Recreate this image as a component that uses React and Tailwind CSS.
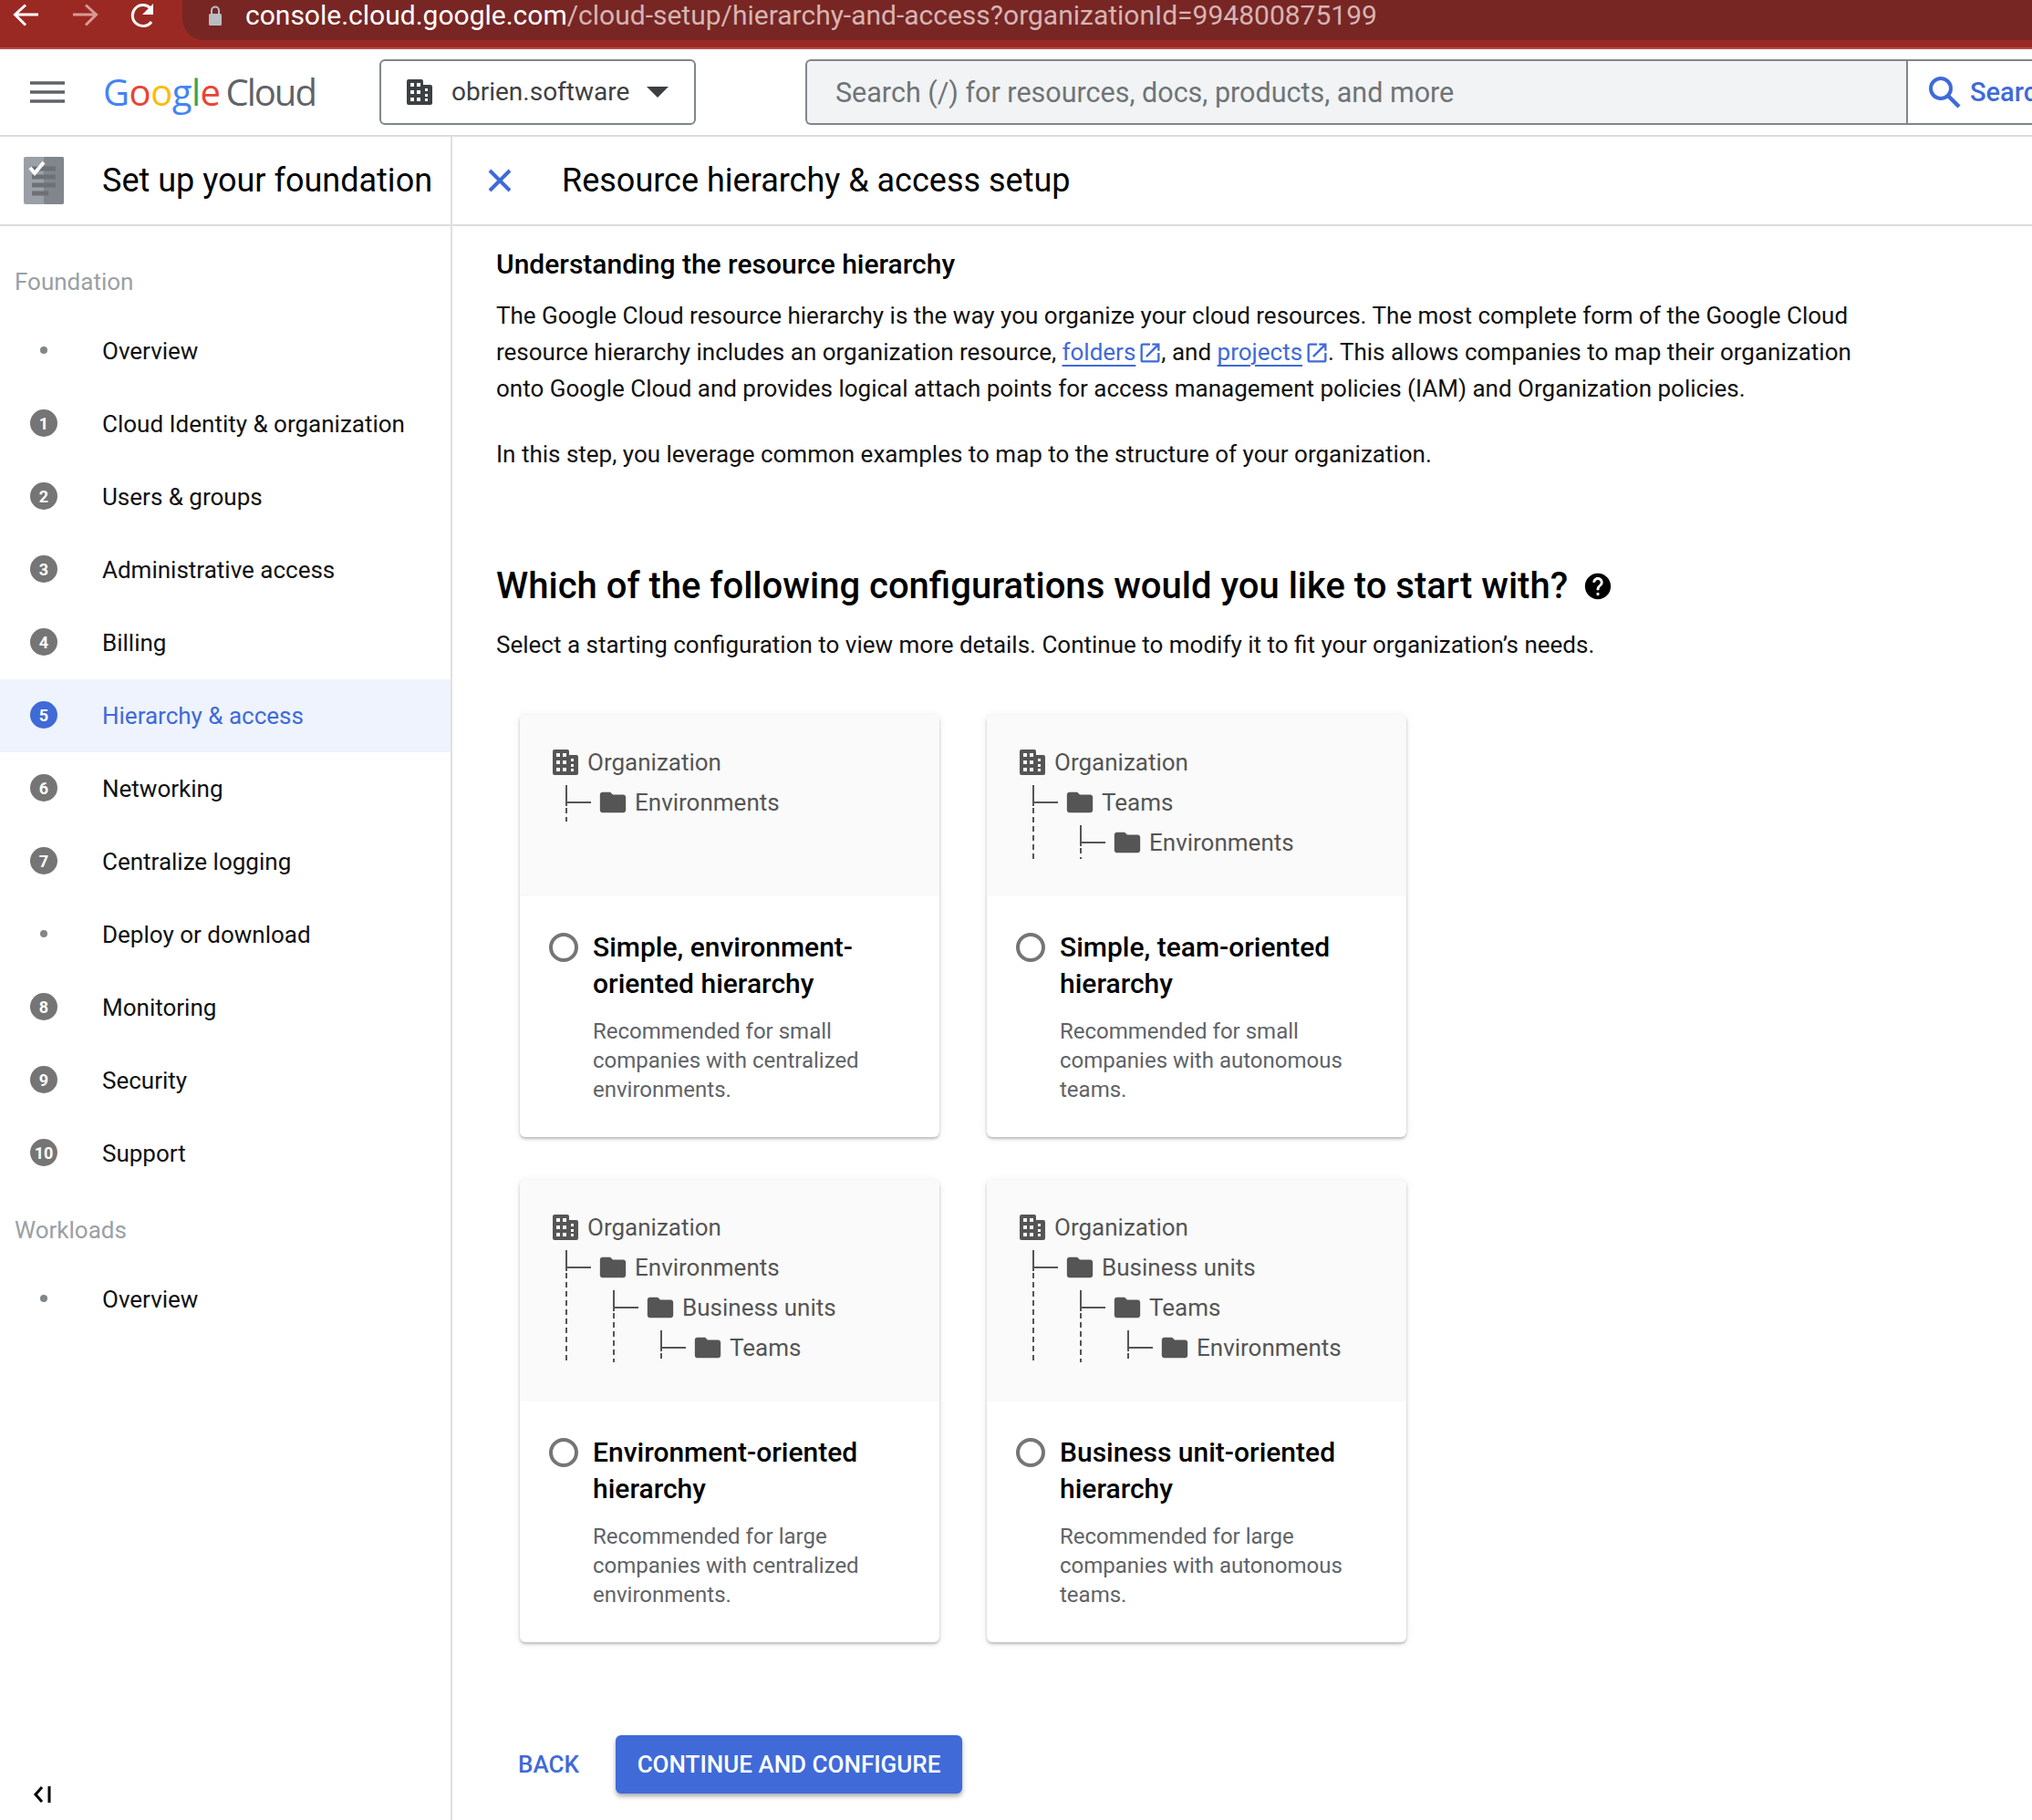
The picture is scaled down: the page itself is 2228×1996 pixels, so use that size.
const BLUE = "#3f6ad8";

function Building({ size = 28, color = "#555555" }) {
  return (
    <svg width={size} height={size} viewBox="0 0 28 28" className="shrink-0">
      <path fill={color} fillRule="evenodd" d="M2 0h14a2 2 0 0 1 2 2v4h8a2 2 0 0 1 2 2v18a2 2 0 0 1-2 2H2a2 2 0 0 1-2-2V2a2 2 0 0 1 2-2zM4 4v4h4V4zm7 0v4h4V4zM4 12v4h4v-4zm7 0v4h4v-4zM4 20v4h4v-4zm7 0v4h4v-4zm9-10v3h3v-3zm0 6v3h3v-3zm0 5v3h3v-3z" />
    </svg>
  );
}

function Folder() {
  return (
    <svg width="34" height="34" viewBox="0 0 24 24" className="shrink-0 -mx-[3px]">
      <path fill="#555555" d="M10 4H4c-1.1 0-2 .9-2 2v12c0 1.1.9 2 2 2h16c1.1 0 2-.9 2-2V8c0-1.1-.9-2-2-2h-8l-2-2z" />
    </svg>
  );
}

function External() {
  return (
    <svg width="28" height="28" viewBox="0 0 24 24" className="inline-block align-[-6px] ml-[2px] -mr-[2px]">
      <path fill={BLUE} d="M19 19H5V5h7V3H5c-1.11 0-2 .9-2 2v14c0 1.1.89 2 2 2h14c1.1 0 2-.9 2-2v-7h-2v7zM14 3v2h3.59l-9.83 9.83 1.41 1.41L19 6.41V10h2V3h-7z" />
    </svg>
  );
}

function Connector({ tail }) {
  return (
    <svg width="52" height="44" viewBox="0 0 52 44" className="shrink-0 overflow-visible">
      <path d="M15 3V26M15 22H42" stroke="#555555" strokeWidth="2" fill="none" />
      <path d={`M15 28V${44 + tail}`} stroke="#555555" strokeWidth="2" fill="none" strokeDasharray="6 4" />
    </svg>
  );
}

function Card({ headerH, rows, title, desc }) {
  const end = rows.length === 1 ? -1 : rows.length === 2 ? -4 : -6;
  return (
    <div className="w-[460px] rounded-[6px] bg-white shadow-[0_2px_3px_rgba(60,64,67,0.32),0_1px_10px_rgba(60,64,67,0.09)] overflow-hidden">
      <div className="bg-[#fafafa] pl-[36px] pt-[30px]" style={{ height: headerH }}>
        <div className="flex items-center h-[44px] text-[#555555] text-[26px] leading-[44px]">
          <Building />
          <span className="ml-[10px]">Organization</span>
        </div>
        {rows.map((r, i) => (
          <div key={r} className="flex items-center h-[44px] text-[#555555] text-[26px] leading-[44px]">
            {i > 0 && <div className="shrink-0" style={{ width: i * 52 }} />}
            <Connector tail={(rows.length - 1 - i) * 44 + end} />
            <Folder />
            <span className="ml-[10px]">{r}</span>
          </div>
        ))}
      </div>
      <div className="flex pl-[32px] pt-[36px] h-[264px]">
        <div className="w-[32px] h-[32px] rounded-full border-[4px] border-[#757575] shrink-0 mt-[4px]" />
        <div className="ml-[16px] w-[350px]">
          <div className="text-[30px] leading-[40px] font-medium text-black whitespace-nowrap">{title}</div>
          <div className="mt-[16px] text-[#5f6368] text-[24px] leading-[32px] whitespace-nowrap">{desc}</div>
        </div>
      </div>
    </div>
  );
}

const nav = [
  ["•", "Overview"],
  ["1", "Cloud Identity & organization"],
  ["2", "Users & groups"],
  ["3", "Administrative access"],
  ["4", "Billing"],
  ["5", "Hierarchy & access", true],
  ["6", "Networking"],
  ["7", "Centralize logging"],
  ["•", "Deploy or download"],
  ["8", "Monitoring"],
  ["9", "Security"],
  ["10", "Support"],
];

function NavItem({ n, label, active }) {
  return (
    <div className={`flex items-center h-[80px] ${active ? "bg-[#eef3fd] text-[#3f6ad8]" : "text-[#111111]"} text-[26px]`}>
      <div className="w-[112px] flex justify-center pr-[16px] shrink-0 -mt-[2px]">
        {n === "•" ? (
          <div className="w-[8px] h-[8px] rounded-full bg-[#80868b]" />
        ) : (
          <div className={`w-[30px] h-[30px] rounded-full flex items-center justify-center text-white font-bold text-[18px] ${active ? "bg-[#3f6ad8]" : "bg-[#757575]"}`}>
            {n}
          </div>
        )}
      </div>
      <span>{label}</span>
    </div>
  );
}

export default function App() {
  return (
    <div className="w-[2228px] h-[1996px] overflow-hidden bg-white flex flex-col" style={{ fontFamily: "Roboto, sans-serif" }}>
      {/* browser bar */}
      <div className="h-[54px] bg-[#9a2923] border-b-[2px] border-[#b34f4a] flex shrink-0">
        <div className="w-[200px] flex shrink-0 pl-[14px] pt-[4px] gap-[34px]">
          <svg width="30" height="26" viewBox="0 0 30 26"><path d="M28 12H3M14 1.5 2.5 12 14 23.5" stroke="#fff" strokeWidth="3" fill="none" /></svg>
          <svg width="30" height="26" viewBox="0 0 30 26"><path d="M2 12h25M16 1.5 27.5 12 16 23.5" stroke="#d99a96" strokeWidth="3" fill="none" /></svg>
          <svg width="30" height="28" viewBox="0 0 30 28"><path d="M24 20a11.500 11.500 0 1 1-1-15" stroke="#fff" strokeWidth="3" fill="none" /><path d="M26 0v12H14z" fill="#fff" /></svg>
        </div>
        <div className="flex-1 h-[44px] bg-[#772624] rounded-bl-[24px] flex pl-[28px]">
          <svg width="16" height="24" viewBox="0 0 16 24" className="mt-[5px] shrink-0">
            <path d="M4 11V6.500a4 4 0 0 1 8 0V11" stroke="#b9bdc1" strokeWidth="2" fill="none" />
            <rect x="1" y="10" width="14" height="13" rx="1.500" fill="#b9bdc1" />
          </svg>
          <div className="ml-[25px] text-[30px] leading-[34px] whitespace-nowrap text-white">
            console.cloud.google.com<span className="text-[#d6b4b2]">/cloud-setup/hierarchy-and-access?organizationId=994800875199</span>
          </div>
        </div>
      </div>

      {/* app header */}
      <div className="h-[96px] border-b-[2px] border-[#dadce0] flex items-center shrink-0">
        <svg width="38" height="24" viewBox="0 0 38 24" className="ml-[33px] shrink-0">
          <path d="M0 2h38M0 12h38M0 22h38" stroke="#5f6368" strokeWidth="3.500" />
        </svg>
        <div className="ml-[42px] w-[303px] text-[40px] leading-none whitespace-nowrap flex" style={{ fontFamily: "'Open Sans', sans-serif" }}>
          <span className="tracking-[-0.5px]">
            <span className="text-[#4285f4]">G</span>
            <span className="text-[#ea4335]">o</span>
            <span className="text-[#fbbc05]">o</span>
            <span className="text-[#4285f4]">g</span>
            <span className="text-[#34a853]">l</span>
            <span className="text-[#ea4335]">e</span>
          </span>
          <span className="text-[#5f6368] ml-[6px] tracking-[-2px]">Cloud</span>
        </div>
        <div className="w-[347px] h-[72px] border-[2px] border-[#80868b] rounded-[6px] flex items-center pl-[28px] text-[#3c4043] text-[28px] shrink-0">
          <Building color="#3c4043" />
          <span className="ml-[21px]">obrien.software</span>
          <svg width="24" height="12" viewBox="0 0 24 12" className="ml-[19px]"><path d="M0 0h24L12 12z" fill="#3c4043" /></svg>
        </div>
        <div className="ml-[120px] w-[1207px] h-[72px] bg-[#f1f3f4] border-[2px] border-r-0 border-[#80868b] rounded-l-[6px] flex items-center pl-[31px] pt-[1px] text-[#6f7377] text-[30.500px] shrink-0">
          Search (/) for resources, docs, products, and more
        </div>
        <div className="h-[72px] flex-1 border-l-[2px] border-y-[2px] border-y-[#80868b] border-l-[#80868b] flex items-center pl-[21px] text-[#3f6ad8] text-[29px] font-medium overflow-hidden">
          <svg width="38" height="38" viewBox="0 0 38 38" className="shrink-0">
            <circle cx="15" cy="15" r="11" stroke="#3f6ad8" strokeWidth="4" fill="none" />
            <path d="M23 23l12 12" stroke="#3f6ad8" strokeWidth="4.500" />
          </svg>
          <span className="ml-[9px] pt-[2px]">Search</span>
        </div>
      </div>

      <div className="flex flex-1 min-h-0">
        {/* sidebar */}
        <div className="w-[496px] border-r-[2px] border-[#e0e0e0] flex flex-col shrink-0">
          <div className="h-[98px] border-b-[2px] border-[#dadce0] flex items-center shrink-0">
            <svg width="44" height="52" viewBox="0 0 44 52" className="ml-[26px] shrink-0">
              <rect width="44" height="52" rx="2" fill="#9aa0a6" />
              <rect x="22" width="22" height="52" rx="2" fill="#80868b" />
              <path d="M9 13h26M9 22h26M9 31h26M9 40h18" stroke="#6d7175" strokeWidth="5" />
              <path d="M7 12l5 6 10-12" stroke="#fff" strokeWidth="4" fill="none" />
            </svg>
            <span className="ml-[42px] text-[36px] text-black whitespace-nowrap">Set up your foundation</span>
          </div>
          <div className="h-[40px] mt-[41px] pl-[16px] flex items-center text-[#9aa0a6] text-[26px] shrink-0">Foundation</div>
          <div className="mt-[16px] shrink-0">
            {nav.map(([n, l, a]) => <NavItem key={l} n={n} label={l} active={a} />)}
          </div>
          <div className="h-[40px] mt-[24px] pl-[16px] flex items-center text-[#9aa0a6] text-[26px] shrink-0">Workloads</div>
          <div className="mt-[16px] shrink-0"><NavItem n="•" label="Overview" /></div>
          <div className="mt-auto mb-[18px] ml-[36px]">
            <svg width="22" height="20" viewBox="0 0 22 20"><path d="M10 2 3 10l7 8M18 1v18" stroke="#000" strokeWidth="3" fill="none" /></svg>
          </div>
        </div>

        {/* main */}
        <div className="flex-1 flex flex-col min-w-0">
          <div className="h-[98px] border-b-[2px] border-[#dadce0] flex items-center shrink-0">
            <svg width="26" height="26" viewBox="0 0 26 26" className="ml-[39px] shrink-0"><path d="M2 2l22 22M24 2 2 24" stroke="#3f6ad8" strokeWidth="4" /></svg>
            <span className="ml-[55px] text-[36px] text-black whitespace-nowrap">Resource hierarchy &amp; access setup</span>
          </div>
          <div className="pl-[48px] flex-1 flex flex-col">
            <div className="mt-[22px] text-[30px] leading-[40px] font-medium text-black">Understanding the resource hierarchy</div>
            <div className="mt-[16px] text-[26px] leading-[40px] text-[#111111] whitespace-nowrap">
              The Google Cloud resource hierarchy is the way you organize your cloud resources. The most complete form of the Google Cloud<br />
              resource hierarchy includes an organization resource, <span className="text-[#3f6ad8] underline decoration-2 underline-offset-[5px]">folders</span><External />, and <span className="text-[#3f6ad8] underline decoration-2 underline-offset-[5px]">projects</span><External />. This allows companies to map their organization<br />
              onto Google Cloud and provides logical attach points for access management policies (IAM) and Organization policies.
            </div>
            <div className="mt-[32px] text-[26px] leading-[40px] text-[#111111]">In this step, you leverage common examples to map to the structure of your organization.</div>
            <div className="mt-[95px] flex items-center h-[60px]">
              <span className="text-[40px] font-medium text-black whitespace-nowrap">Which of the following configurations would you like to start with?</span>
              <svg width="34" height="34" viewBox="0 0 24 24" className="ml-[16px]"><path fill="#000" d="M12 2C6.480 2 2 6.480 2 12s4.480 10 10 10 10-4.480 10-10S17.520 2 12 2zm1 17h-2v-2h2v2zm2.070-7.750l-.9.920C13.450 12.900 13 13.500 13 15h-2v-.5c0-1.100.45-2.100 1.170-2.830l1.240-1.260c.37-.36.59-.86.59-1.410 0-1.100-.9-2-2-2s-2 .9-2 2H8c0-2.210 1.790-4 4-4s4 1.790 4 4c0 .88-.36 1.680-.93 2.250z" /></svg>
            </div>
            <div className="mt-[14px] text-[26px] leading-[40px] text-[#111111]">Select a starting configuration to view more details. Continue to modify it to fit your organization’s needs.</div>
            <div className="mt-[57px] ml-[26px] grid grid-cols-[460px_460px] gap-x-[52px] gap-y-[47px] w-max">
              <Card headerH={199} rows={["Environments"]} title={<>Simple, environment-<br />oriented hierarchy</>} desc={<>Recommended for small<br />companies with centralized<br />environments.</>} />
              <Card headerH={199} rows={["Teams", "Environments"]} title={<>Simple, team-oriented<br />hierarchy</>} desc={<>Recommended for small<br />companies with autonomous<br />teams.</>} />
              <Card headerH={243} rows={["Environments", "Business units", "Teams"]} title={<>Environment-oriented<br />hierarchy</>} desc={<>Recommended for large<br />companies with centralized<br />environments.</>} />
              <Card headerH={243} rows={["Business units", "Teams", "Environments"]} title={<>Business unit-oriented<br />hierarchy</>} desc={<>Recommended for large<br />companies with autonomous<br />teams.</>} />
            </div>
            <div className="mt-[102px] ml-[24px] flex items-center">
              <span className="text-[#3f6ad8] text-[26px] font-medium w-[107px]">BACK</span>
              <div className="w-[380px] h-[64px] bg-[#3f6ad8] rounded-[6px] text-white text-[26px] font-medium flex items-center justify-center shadow-[0_3px_5px_rgba(60,64,67,0.45)]">CONTINUE AND CONFIGURE</div>
            </div>
          </div>
        </div>
      </div>
    </div>
  );
}
